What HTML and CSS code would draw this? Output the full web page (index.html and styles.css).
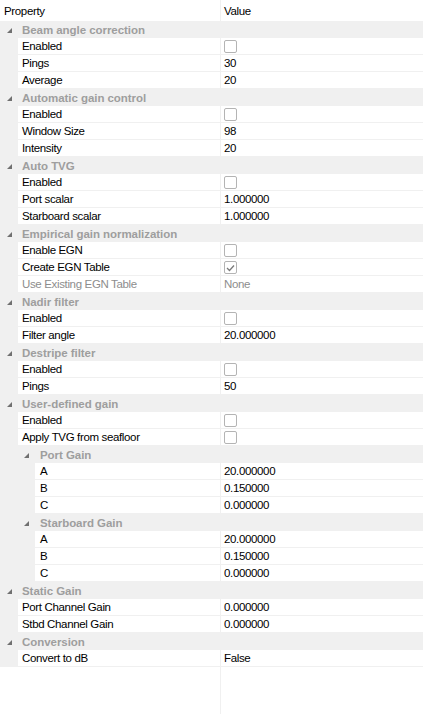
FILE: index.html
```html
<!DOCTYPE html>
<html lang="en">
<head>
  <meta charset="UTF-8" />
  <meta name="viewport" content="width=device-width, initial-scale=1.0" />
  <title>Properties</title>
  <link rel="stylesheet" href="styles.css">
</head>
<body>
  <div class="grid">
    <div class="head">
      <div class="name">Property</div>
      <div class="value">Value</div>
    </div>

    <div class="cat"><span class="arrow"></span>Beam angle correction</div>
    <div class="row"><div class="name">Enabled</div><div class="value"><span class="check"></span></div></div>
    <div class="row"><div class="name">Pings</div><div class="value">30</div></div>
    <div class="row"><div class="name">Average</div><div class="value">20</div></div>

    <div class="cat"><span class="arrow"></span>Automatic gain control</div>
    <div class="row"><div class="name">Enabled</div><div class="value"><span class="check"></span></div></div>
    <div class="row"><div class="name">Window Size</div><div class="value">98</div></div>
    <div class="row"><div class="name">Intensity</div><div class="value">20</div></div>

    <div class="cat"><span class="arrow"></span>Auto TVG</div>
    <div class="row"><div class="name">Enabled</div><div class="value"><span class="check"></span></div></div>
    <div class="row"><div class="name">Port scalar</div><div class="value">1.000000</div></div>
    <div class="row"><div class="name">Starboard scalar</div><div class="value">1.000000</div></div>

    <div class="cat"><span class="arrow"></span>Empirical gain normalization</div>
    <div class="row"><div class="name">Enable EGN</div><div class="value"><span class="check"></span></div></div>
    <div class="row"><div class="name">Create EGN Table</div><div class="value"><span class="check checked"><svg width="9" height="8" viewBox="0 0 9 8"><polyline points="1,4 3.5,6.5 8,1.5" fill="none" stroke="#7a7a7a" stroke-width="1.3"/></svg></span></div></div>
    <div class="row disabled"><div class="name">Use Existing EGN Table</div><div class="value">None</div></div>

    <div class="cat"><span class="arrow"></span>Nadir filter</div>
    <div class="row"><div class="name">Enabled</div><div class="value"><span class="check"></span></div></div>
    <div class="row"><div class="name">Filter angle</div><div class="value">20.000000</div></div>

    <div class="cat"><span class="arrow"></span>Destripe filter</div>
    <div class="row"><div class="name">Enabled</div><div class="value"><span class="check"></span></div></div>
    <div class="row"><div class="name">Pings</div><div class="value">50</div></div>

    <div class="cat"><span class="arrow"></span>User-defined gain</div>
    <div class="row"><div class="name">Enabled</div><div class="value"><span class="check"></span></div></div>
    <div class="row"><div class="name">Apply TVG from seafloor</div><div class="value"><span class="check"></span></div></div>

    <div class="cat sub"><span class="arrow"></span>Port Gain</div>
    <div class="row sub"><div class="name">A</div><div class="value">20.000000</div></div>
    <div class="row sub"><div class="name">B</div><div class="value">0.150000</div></div>
    <div class="row sub"><div class="name">C</div><div class="value">0.000000</div></div>

    <div class="cat sub"><span class="arrow"></span>Starboard Gain</div>
    <div class="row sub"><div class="name">A</div><div class="value">20.000000</div></div>
    <div class="row sub"><div class="name">B</div><div class="value">0.150000</div></div>
    <div class="row sub"><div class="name">C</div><div class="value">0.000000</div></div>

    <div class="cat"><span class="arrow"></span>Static Gain</div>
    <div class="row"><div class="name">Port Channel Gain</div><div class="value">0.000000</div></div>
    <div class="row"><div class="name">Stbd Channel Gain</div><div class="value">0.000000</div></div>

    <div class="cat"><span class="arrow"></span>Conversion</div>
    <div class="row"><div class="name">Convert to dB</div><div class="value">False</div></div>

    <div class="filler"><div class="name"></div></div>
  </div>
</body>
</html>
```

FILE: styles.css
```css
* { box-sizing: border-box; }
body {
  margin: 0;
  background: #fff;
  font-family: "Liberation Sans", Arial, sans-serif;
  font-size: 11.5px;
  letter-spacing: -0.35px;
  color: #000;
}
.grid {
  display: flex;
  flex-direction: column;
  width: 423px;
  height: 714px;
  overflow: hidden;
}
.head {
  display: flex;
  height: 21px;
  line-height: 22px;
}
.head .name {
  width: 221px;
  padding-left: 4px;
  border-right: 1px solid #f0f0f0;
}
.head .value {
  padding-left: 3px;
}
.cat {
  display: flex;
  align-items: center;
  height: 17px;
  background: #f0f0f0;
  color: #9e9e9e;
  font-weight: bold;
  letter-spacing: -0.05px;
  padding-left: 7px;
}
.cat.sub {
  padding-left: 24px;
}
.arrow {
  width: 0;
  height: 0;
  border-left: 5px solid transparent;
  border-bottom: 5px solid #707070;
  margin-right: 10px;
  margin-top: 1px;
}
.cat.sub .arrow {
  margin-right: 11px;
}
.row {
  display: flex;
  height: 17px;
  line-height: 17px;
  background: #f0f0f0;
}
.row .name {
  width: 203px;
  margin-left: 18px;
  padding-left: 4px;
  background: #fff;
  border-bottom: 1px solid #f0f0f0;
  border-right: 1px solid #f0f0f0;
  white-space: nowrap;
}
.row.sub .name {
  width: 186px;
  margin-left: 35px;
  padding-left: 5px;
}
.row .value {
  flex: 1;
  padding-left: 3px;
  background: #fff;
  border-bottom: 1px solid #f0f0f0;
}
.row.disabled {
  color: #8d8d8d;
}
.check {
  display: inline-flex;
  align-items: center;
  justify-content: center;
  width: 13px;
  height: 13px;
  margin-top: 2px;
  vertical-align: top;
  border: 1px solid #b4b4b4;
  border-radius: 2px;
  background: #fff;
}
.filler {
  flex: 1;
}
.filler .name {
  width: 221px;
  height: 100%;
  border-right: 1px solid #f0f0f0;
}
```
